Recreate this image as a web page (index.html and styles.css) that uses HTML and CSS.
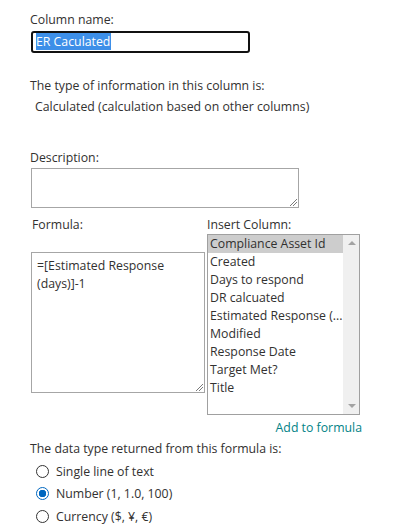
FILE: index.html
```html
<!DOCTYPE html>
<html>
<head>
<meta charset="utf-8">
<link rel="stylesheet" href="styles.css">
</head>
<body>
<div class="panel">
  <div class="label first">Column name:</div>
  <div class="name-input"><span class="sel">ER Caculated</span></div>

  <div class="label type-label">The type of information in this column is:</div>
  <div class="type-value">Calculated (calculation based on other columns)</div>

  <div class="label desc-label">Description:</div>
  <div class="desc-box"><span class="grip"></span></div>

  <div class="formula-row">
    <div class="formula-col">
      <div class="label col-label">Formula:</div>
      <div class="formula-box">=[Estimated Response (days)]-1<span class="grip"></span></div>
    </div>
    <div class="insert-col">
      <div class="label col-label">Insert Column:</div>
      <div class="listbox">
        <div class="items">
          <div class="item selected">Compliance Asset Id</div>
          <div class="item">Created</div>
          <div class="item">Days to respond</div>
          <div class="item">DR calcuated</div>
          <div class="item">Estimated Response (...</div>
          <div class="item">Modified</div>
          <div class="item">Response Date</div>
          <div class="item">Target Met?</div>
          <div class="item">Title</div>
        </div>
        <div class="scrollbar">
          <span class="arrow up"></span>
          <span class="arrow down"></span>
        </div>
      </div>
      <div class="add-link">Add to formula</div>
    </div>
  </div>

  <div class="label return-label">The data type returned from this formula is:</div>
  <div class="radios">
    <div class="radio-row"><span class="radio"></span>Single line of text</div>
    <div class="radio-row"><span class="radio checked"></span>Number (1, 1.0, 100)</div>
    <div class="radio-row"><span class="radio"></span>Currency ($, ¥, €)</div>
  </div>
</div>
</body>
</html>
```

FILE: styles.css
```css
html, body {
  margin: 0;
  padding: 0;
  background: #ffffff;
}
body {
  font-family: "Open Sans", "Noto Sans", "Liberation Sans", sans-serif;
  font-size: 12.3px;
  color: #323130;
  width: 416px;
  height: 526px;
  overflow: hidden;
}
.panel {
  padding: 11px 0 0 30px;
}
.label {
  line-height: 18px;
  white-space: nowrap;
}
.name-input {
  margin-top: 2px;
  width: 212px;
  height: 18px;
  border: 2px solid #111111;
  border-radius: 3px;
  padding: 0 0 0 3px;
  line-height: 18px;
  margin-left: 1px;
}
.sel {
  background: #3d8fe8;
  color: #ffffff;
  display: inline-block;
  line-height: 17px;
  padding: 0 1px 0 0;
}
.type-label {
  margin-top: 24px;
}
.type-value {
  line-height: 18px;
  margin-top: 3px;
  padding-left: 5px;
  white-space: nowrap;
}
.desc-label {
  margin-top: 33px;
}
.desc-box {
  position: relative;
  margin-top: 1px;
  margin-left: 1px;
  width: 266px;
  height: 38px;
  border: 1px solid #a6a6a6;
}
.grip {
  position: absolute;
  right: 1px;
  bottom: 1px;
  width: 7px;
  height: 7px;
  background:
    linear-gradient(135deg, transparent 0 45%, #7a7a7a 45% 55%, transparent 55% 68%, #7a7a7a 68% 78%, transparent 78%);
}
.formula-row {
  display: flex;
  margin-top: 8px;
}
.formula-col {
  width: 175px;
  padding-left: 2px;
}
.col-label {
  line-height: 18px;
}
.formula-box {
  position: relative;
  margin-top: 18px;
  margin-left: -1px;
  width: 164px;
  height: 131px;
  border: 1px solid #a6a6a6;
  padding: 4px 3px 4px 5px;
  line-height: 18px;
}
.insert-col {
  width: 153px;
}
.listbox {
  display: flex;
  margin-top: 0;
  width: 151px;
  height: 179px;
  border: 1px solid #a0a0a0;
}
.items {
  flex: 1;
}
.item {
  height: 18px;
  line-height: 18px;
  padding-left: 2px;
  white-space: nowrap;
}
.item.selected {
  background: #cdcdcd;
}
.scrollbar {
  position: relative;
  width: 17px;
  background: #f0f0f0;
}
.arrow {
  position: absolute;
  left: 5px;
  width: 0;
  height: 0;
  border-left: 4px solid transparent;
  border-right: 4px solid transparent;
}
.arrow.up {
  top: 6px;
  border-bottom: 4px solid #a3a3a3;
}
.arrow.down {
  bottom: 6px;
  border-top: 4px solid #a3a3a3;
}
.add-link {
  color: #038387;
  text-align: right;
  line-height: 18px;
  margin-top: 4px;
  margin-right: -2px;
  white-space: nowrap;
}
.return-label {
  margin-top: 3px;
}
.radios {
  padding-top: 2px;
}
.radio-row {
  display: flex;
  align-items: center;
  height: 22.5px;
  padding-left: 6px;
  white-space: nowrap;
}
.radio {
  box-sizing: border-box;
  width: 13px;
  height: 13px;
  border: 1px solid #333333;
  border-radius: 50%;
  margin-right: 7px;
  background: #ffffff;
}
.radio.checked {
  border: 1px solid #0067c0;
  background: radial-gradient(circle, #0067c0 0 3.5px, #ffffff 4px);
}
```
